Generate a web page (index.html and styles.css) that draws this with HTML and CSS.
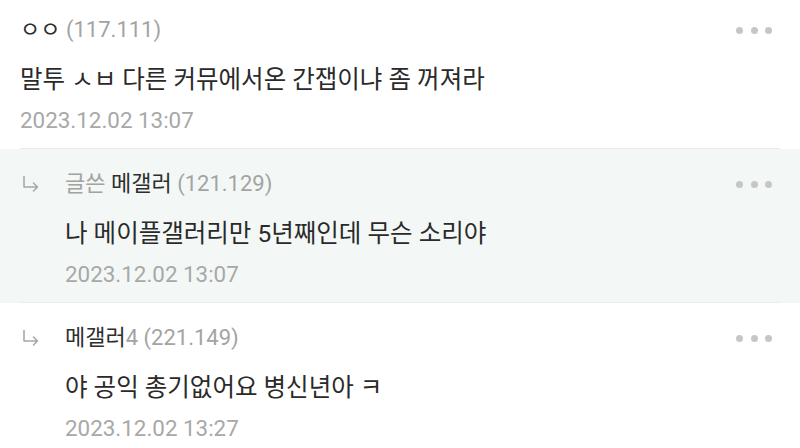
FILE: index.html
```html
<!DOCTYPE html>
<html lang="ko">
<head>
<meta charset="utf-8">
<link rel="stylesheet" href="styles.css">
</head>
<body>
<div class="list">
  <div class="comment">
    <div class="inner">
      <div class="body">
        <div class="meta">
          <span class="who"><span class="nick">ㅇㅇ</span> <span class="ip">(117.111)</span></span>
          <span class="more"><i></i><i></i><i></i></span>
        </div>
        <div class="text">말투 ㅅㅂ 다른 커뮤에서온 간잽이냐 좀 꺼져라</div>
        <div class="date">2023.12.02 13:07</div>
      </div>
    </div>
  </div>
  <div class="comment reply writer">
    <div class="inner">
      <div class="arrow">
        <svg width="18" height="18" viewBox="0 0 18 18"><path d="M2 1.5V12H15.5M11.5 8L15.5 12L11.5 16" fill="none" stroke="#a8a8a8" stroke-width="1.6" stroke-linecap="round" stroke-linejoin="round"/></svg>
      </div>
      <div class="body">
        <div class="meta">
          <span class="who"><span class="tag">글쓴</span> <span class="nick">메갤러</span> <span class="ip">(121.129)</span></span>
          <span class="more"><i></i><i></i><i></i></span>
        </div>
        <div class="text">나 메이플갤러리만 5년째인데 무슨 소리야</div>
        <div class="date">2023.12.02 13:07</div>
      </div>
    </div>
  </div>
  <div class="comment reply">
    <div class="inner">
      <div class="arrow">
        <svg width="18" height="18" viewBox="0 0 18 18"><path d="M2 1.5V12H15.5M11.5 8L15.5 12L11.5 16" fill="none" stroke="#a8a8a8" stroke-width="1.6" stroke-linecap="round" stroke-linejoin="round"/></svg>
      </div>
      <div class="body">
        <div class="meta">
          <span class="who"><span class="nick">메갤러</span><span class="ip">4 (221.149)</span></span>
          <span class="more"><i></i><i></i><i></i></span>
        </div>
        <div class="text">야 공익 총기없어요 병신년아 ㅋ</div>
        <div class="date">2023.12.02 13:27</div>
      </div>
    </div>
  </div>
</div>
</body>
</html>
```
FILE: styles.css
```css
html, body {
  margin: 0;
  padding: 0;
  background: #ffffff;
}
body {
  width: 800px;
  height: 448px;
  overflow: hidden;
  font-family: Roboto, "Noto Sans CJK KR", sans-serif;
  color: #2b2b2b;
}
.list {
  margin-top: -5px;
}
.comment {
  background: #ffffff;
}
.comment.writer {
  background: #f3f8f6;
}
.inner {
  margin: 0 20px;
  padding: 20px 0 13px;
  border-bottom: 1px solid #e9ecea;
  display: flex;
}
.arrow {
  width: 45px;
  flex: none;
  height: 30px;
  display: flex;
  align-items: center;
  padding-left: 2px;
  box-sizing: border-box;
}
.arrow svg {
  display: block;
}
.body {
  flex: 1;
  min-width: 0;
}
.meta {
  display: flex;
  align-items: center;
  height: 30px;
  font-size: 22px;
  line-height: 30px;
}
.who {
  white-space: pre;
}
.nick {
  color: #2e2e2e;
}
.ip, .tag {
  color: #a3a3a3;
}
.more {
  margin-left: auto;
  display: flex;
  gap: 7.5px;
  padding-right: 8px;
}
.more i {
  display: block;
  width: 7px;
  height: 7px;
  border-radius: 50%;
  background: #c6c6c6;
}
.text {
  margin-top: 20px;
  font-size: 24.5px;
  line-height: 30px;
  color: #2a2a2a;
}
.date {
  margin-top: 10px;
  font-size: 22.4px;
  line-height: 30px;
  color: #a8a8a8;
}
```
